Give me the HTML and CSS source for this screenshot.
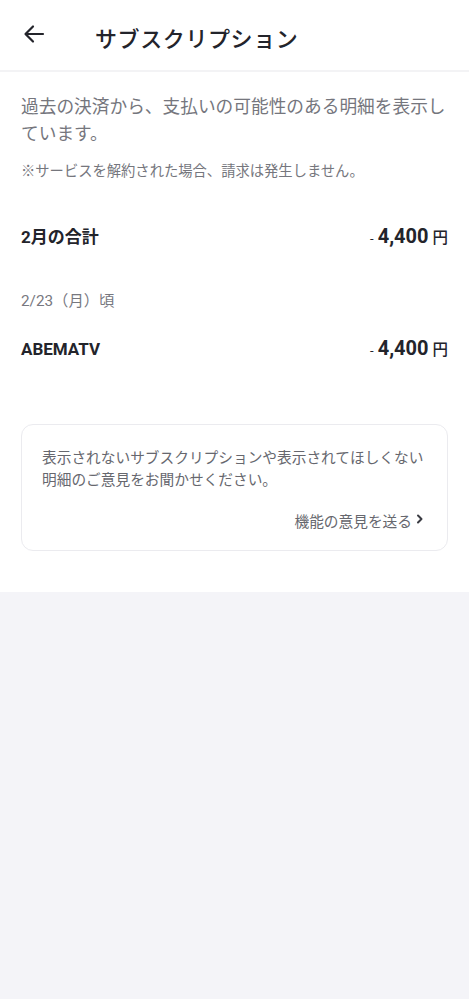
FILE: index.html
```html
<!DOCTYPE html>
<html lang="ja">
<head>
<meta charset="utf-8">
<link rel="stylesheet" href="styles.css">
</head>
<body>
<div class="page">
  <header class="header">
    <svg class="back" width="24" height="24" viewBox="0 0 24 24"><path d="M21 12H4M11 4.5L3.5 12l7.5 7.5" fill="none" stroke="#23242b" stroke-width="2.2" stroke-linecap="round" stroke-linejoin="round"/></svg>
    <h1 class="title">サブスクリプション</h1>
  </header>
  <main class="content">
    <p class="desc">過去の決済から、支払いの可能性のある明細を表示しています。</p>
    <p class="note">※サービスを解約された場合、請求は発生しません。</p>
    <div class="row total">
      <span class="label">2月の合計</span>
      <span class="amount"><span class="minus">-</span> <span class="num">4,400</span> <span class="yen">円</span></span>
    </div>
    <div class="date">2/23（月）頃</div>
    <div class="row item">
      <span class="label">ABEMATV</span>
      <span class="amount"><span class="minus">-</span> <span class="num">4,400</span> <span class="yen">円</span></span>
    </div>
    <div class="card">
      <p class="card-text">表示されないサブスクリプションや表示されてほしくない明細のご意見をお聞かせください。</p>
      <div class="card-link">機能の意見を送る<svg class="chev" width="8" height="12" viewBox="0 0 8 12"><path d="M2 2.5L5.5 6 2 9.5" fill="none" stroke="#3a3b42" stroke-width="2" stroke-linecap="round" stroke-linejoin="round"/></svg></div>
    </div>
  </main>
</div>
</body>
</html>
```
FILE: styles.css
```css
html, body {
  margin: 0;
  padding: 0;
  background: #f4f4f8;
  font-family: Roboto, "Noto Sans CJK JP", sans-serif;
}
.page {
  background: #ffffff;
  width: 469px;
}
.header {
  height: 72px;
  display: flex;
  align-items: center;
  border-bottom: 2px solid #f3f3f5;
  box-sizing: border-box;
  padding-left: 22px;
}
.back {
  display: block;
  margin-top: -2px;
}
.title {
  margin: 4px 0 0 49px;
  font-size: 22px;
  font-weight: 500;
  color: #23242b;
  letter-spacing: 0.6px;
}
.content {
  padding: 22px 21px 41px 21px;
}
.desc {
  margin: 0 -2px 0 0;
  font-size: 17.7px;
  line-height: 27px;
  color: #75767d;
}
.note {
  margin: 13px 0 0 0;
  font-size: 14.3px;
  line-height: 20px;
  color: #75767d;
}
.row {
  display: flex;
  justify-content: space-between;
  align-items: baseline;
}
.total {
  margin-top: 42px;
}
.label {
  font-size: 17px;
  font-weight: 700;
  color: #23242b;
}
.amount {
  color: #23242b;
  font-weight: 700;
}
.minus {
  font-size: 13px;
  font-weight: 400;
}
.num {
  font-size: 20px;
}
.yen {
  font-size: 15.5px;
  font-weight: 500;
}
.date {
  margin-top: 40px;
  font-size: 15.3px;
  color: #77787f;
}
.item {
  margin-top: 26px;
}
.card {
  margin-top: 64px;
  border: 1px solid #ebebef;
  border-radius: 12px;
  padding: 22px 19px 19px 19px;
}
.card-text {
  margin: 0 0 0 1px;
  font-size: 14.7px;
  line-height: 22px;
  color: #66676e;
}
.card-link {
  margin-top: 19px;
  font-size: 14.7px;
  color: #66676e;
  display: flex;
  justify-content: flex-end;
  align-items: center;
  gap: 4px;
  padding-right: 4px;
}
.chev {
  display: block;
  margin-top: -3px;
}
```
